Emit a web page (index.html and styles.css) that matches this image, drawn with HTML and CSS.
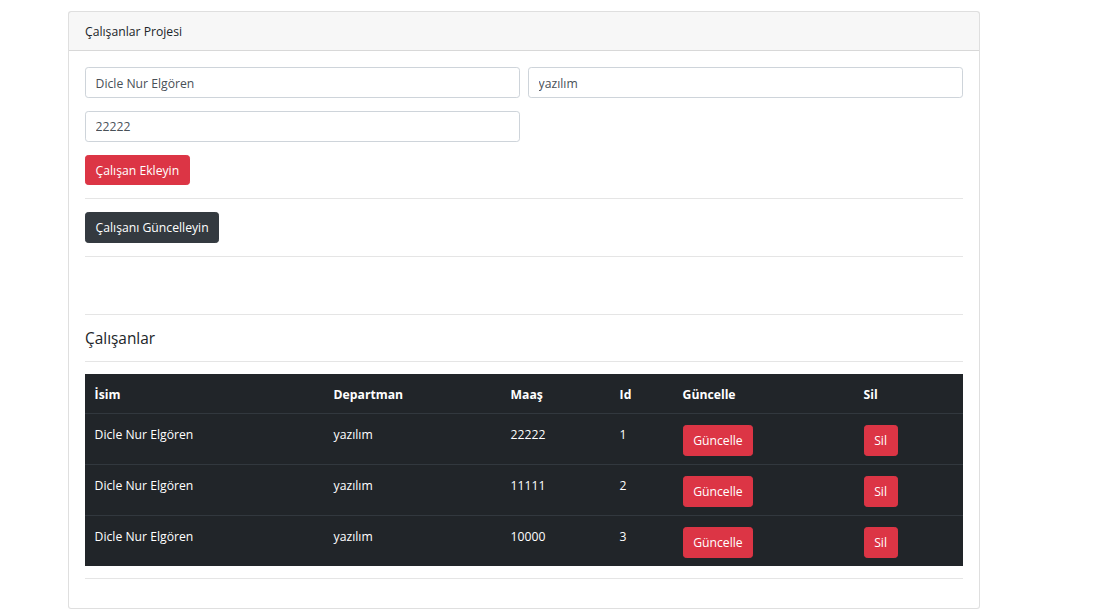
FILE: index.html
```html
<!DOCTYPE html>
<html lang="tr">
<head>
<meta charset="utf-8">
<title>Çalışanlar Projesi</title>
<link rel="stylesheet" href="styles.css">
</head>
<body>
<div class="card">
  <div class="card-header">Çalışanlar Projesi</div>
  <div class="card-body">
    <form class="emp-form">
      <div class="form-row">
        <input class="form-control" type="text" value="Dicle Nur Elgören">
        <input class="form-control" type="text" value="yazılım">
      </div>
      <div class="form-row">
        <input class="form-control" type="text" value="22222">
      </div>
      <button type="button" class="btn btn-danger">Çalışan Ekleyin</button>
    </form>
    <hr>
    <button type="button" class="btn btn-dark">Çalışanı Güncelleyin</button>
    <hr>
    <div class="spacer"></div>
    <hr>
    <h5 class="section-title">Çalışanlar</h5>
    <hr>
    <table class="table">
      <colgroup>
        <col class="c1"><col class="c2"><col class="c3"><col class="c4"><col class="c5"><col class="c6">
      </colgroup>
      <thead>
        <tr><th>İsim</th><th>Departman</th><th>Maaş</th><th>Id</th><th>Güncelle</th><th>Sil</th></tr>
      </thead>
      <tbody>
        <tr><td>Dicle Nur Elgören</td><td>yazılım</td><td>22222</td><td>1</td><td><button type="button" class="btn btn-danger">Güncelle</button></td><td><button type="button" class="btn btn-danger">Sil</button></td></tr>
        <tr><td>Dicle Nur Elgören</td><td>yazılım</td><td>11111</td><td>2</td><td><button type="button" class="btn btn-danger">Güncelle</button></td><td><button type="button" class="btn btn-danger">Sil</button></td></tr>
        <tr><td>Dicle Nur Elgören</td><td>yazılım</td><td>10000</td><td>3</td><td><button type="button" class="btn btn-danger">Güncelle</button></td><td><button type="button" class="btn btn-danger">Sil</button></td></tr>
      </tbody>
    </table>
    <hr>
  </div>
</div>
</body>
</html>
```

FILE: styles.css
```css
* { box-sizing: border-box; }
html, body { margin: 0; padding: 0; background: #fff; }
body {
  font-family: "Open Sans", "Noto Sans", "Liberation Sans", sans-serif;
  font-size: 12.2px;
  line-height: 19.2px;
  color: #212529;
}
.card {
  margin: 11px 0 0 68px;
  width: 912px;
  border: 1px solid rgba(0,0,0,.125);
  border-radius: 3.2px;
  background: #fff;
}
.card-header {
  padding: 10.4px 16px 8.8px;
  background: rgba(0,0,0,.03);
  border-bottom: 1px solid rgba(0,0,0,.125);
}
.card-body { padding: 16px; }
.emp-form { margin: 0; }
.form-row {
  display: grid;
  grid-template-columns: 1fr 1fr;
  gap: 8px;
  margin-bottom: 12.8px;
}
.form-control {
  display: block;
  width: 100%;
  height: 30.8px;
  padding: 5.4px 9.6px 4.2px;
  font: inherit;
  color: #495057;
  background: #fff;
  border: 1px solid #ced4da;
  border-radius: 3.2px;
  outline: none;
}
.btn {
  display: inline-block;
  font: inherit;
  padding: 5.4px 9.6px 4.2px;
  line-height: 19.2px;
  border: 1px solid transparent;
  border-radius: 3.2px;
  color: #fff;
  cursor: pointer;
  vertical-align: middle;
}
.btn-danger { background: #dc3545; border-color: #dc3545; }
.btn-dark { background: #343a40; border-color: #343a40; }
hr {
  margin: 12.8px 0;
  border: 0;
  border-top: 1px solid rgba(0,0,0,.1);
  height: 0;
}
.spacer { height: 31.6px; }
.section-title {
  margin: 0 0 6.4px;
  font-size: 15.4px;
  line-height: 19.2px;
  font-weight: 500;
  padding-top: 1px;
  color: #212529;
}
.table {
  width: 100%;
  border-collapse: collapse;
  table-layout: fixed;
  background: #212529;
  color: #fff;
  margin: 0 0 12.8px;
}
.c1 { width: 239px; }
.c2 { width: 177px; }
.c3 { width: 109px; }
.c4 { width: 63px; }
.c5 { width: 181px; }
.c6 { width: 109px; }
.table th, .table td {
  padding: 10.6px 9.6px 8.6px;
  text-align: left;
  vertical-align: top;
  line-height: 19.2px;
}
.table td { padding-top: 11.2px; padding-bottom: 8px; }
.table th { font-weight: 700; border-bottom: 1px solid #32383e; }
.table tbody tr + tr td { border-top: 1px solid #32383e; }
```
